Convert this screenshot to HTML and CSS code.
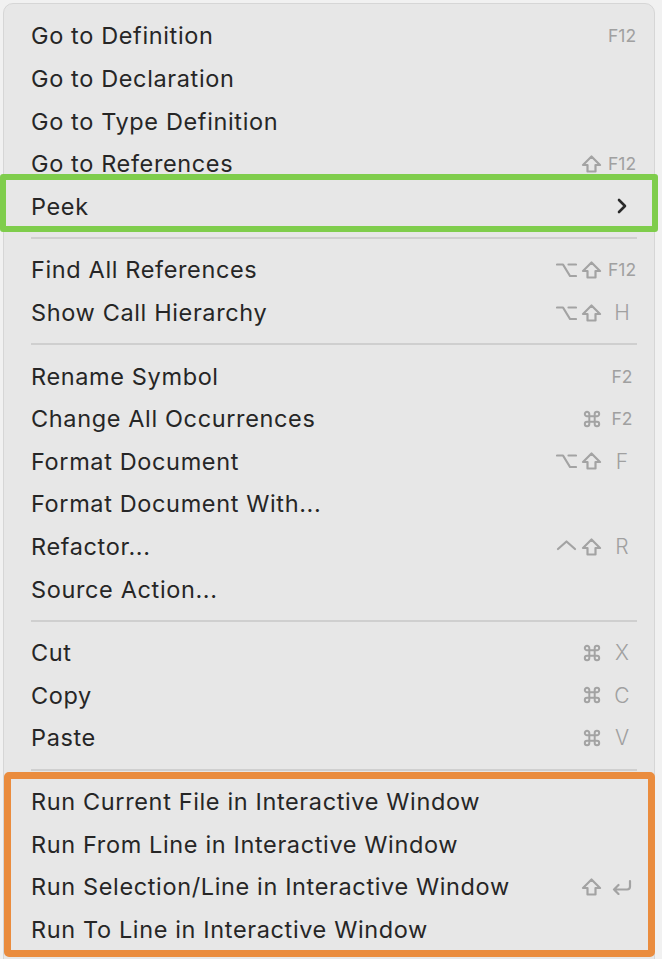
FILE: index.html
```html
<!DOCTYPE html>
<html>
<head>
<meta charset="utf-8">
<link rel="stylesheet" href="styles.css">
</head>
<body>
<div class="menu">
  <div class="row"><span class="label">Go to Definition</span><span class="keys"><span class="mods"></span><span class="key">F12</span></span></div>
  <div class="row"><span class="label">Go to Declaration</span></div>
  <div class="row"><span class="label">Go to Type Definition</span></div>
  <div class="row"><span class="label">Go to References</span><span class="keys"><span class="mods"><svg class="m" width="21" height="18" viewBox="0 0 21 18"><path d="M10.5 1.5 L19 10 H14.5 V16.5 H6.5 V10 H2 Z"/></svg></span><span class="key">F12</span></span></div>
  <div class="row peek"><span class="label">Peek</span><span class="keys"><span class="mods"></span><span class="key"><svg class="chev" width="14" height="16" viewBox="0 0 14 16"><path d="M4 2 L10 8 L4 14"/></svg></span></span></div>
  <div class="sep"></div>
  <div class="row"><span class="label">Find All References</span><span class="keys"><span class="mods"><svg class="m" width="21" height="18" viewBox="0 0 21 18"><path d="M1 3.5 H7 L14 15 H20 M12.5 3.5 H20"/></svg><svg class="m" width="21" height="18" viewBox="0 0 21 18"><path d="M10.5 1.5 L19 10 H14.5 V16.5 H6.5 V10 H2 Z"/></svg></span><span class="key">F12</span></span></div>
  <div class="row"><span class="label">Show Call Hierarchy</span><span class="keys"><span class="mods"><svg class="m" width="21" height="18" viewBox="0 0 21 18"><path d="M1 3.5 H7 L14 15 H20 M12.5 3.5 H20"/></svg><svg class="m" width="21" height="18" viewBox="0 0 21 18"><path d="M10.5 1.5 L19 10 H14.5 V16.5 H6.5 V10 H2 Z"/></svg></span><span class="key big">H</span></span></div>
  <div class="sep"></div>
  <div class="row"><span class="label">Rename Symbol</span><span class="keys"><span class="mods"></span><span class="key">F2</span></span></div>
  <div class="row"><span class="label">Change All Occurrences</span><span class="keys"><span class="mods"><svg class="m" width="20" height="18" viewBox="0 0 20 20"><path d="M7 7 V4.5 A2.5 2.5 0 1 0 4.5 7 H15.5 A2.5 2.5 0 1 0 13 4.5 V15.5 A2.5 2.5 0 1 0 15.5 13 H4.5 A2.5 2.5 0 1 0 7 15.5 Z"/></svg></span><span class="key">F2</span></span></div>
  <div class="row"><span class="label">Format Document</span><span class="keys"><span class="mods"><svg class="m" width="21" height="18" viewBox="0 0 21 18"><path d="M1 3.5 H7 L14 15 H20 M12.5 3.5 H20"/></svg><svg class="m" width="21" height="18" viewBox="0 0 21 18"><path d="M10.5 1.5 L19 10 H14.5 V16.5 H6.5 V10 H2 Z"/></svg></span><span class="key big">F</span></span></div>
  <div class="row"><span class="label">Format Document With...</span></div>
  <div class="row"><span class="label">Refactor...</span><span class="keys"><span class="mods"><svg class="m" width="21" height="18" viewBox="0 0 21 18"><path d="M2 11 L10.5 3.5 L19 11"/></svg><svg class="m" width="21" height="18" viewBox="0 0 21 18"><path d="M10.5 1.5 L19 10 H14.5 V16.5 H6.5 V10 H2 Z"/></svg></span><span class="key big">R</span></span></div>
  <div class="row"><span class="label">Source Action...</span></div>
  <div class="sep"></div>
  <div class="row"><span class="label">Cut</span><span class="keys"><span class="mods"><svg class="m" width="20" height="18" viewBox="0 0 20 20"><path d="M7 7 V4.5 A2.5 2.5 0 1 0 4.5 7 H15.5 A2.5 2.5 0 1 0 13 4.5 V15.5 A2.5 2.5 0 1 0 15.5 13 H4.5 A2.5 2.5 0 1 0 7 15.5 Z"/></svg></span><span class="key big">X</span></span></div>
  <div class="row"><span class="label">Copy</span><span class="keys"><span class="mods"><svg class="m" width="20" height="18" viewBox="0 0 20 20"><path d="M7 7 V4.5 A2.5 2.5 0 1 0 4.5 7 H15.5 A2.5 2.5 0 1 0 13 4.5 V15.5 A2.5 2.5 0 1 0 15.5 13 H4.5 A2.5 2.5 0 1 0 7 15.5 Z"/></svg></span><span class="key big">C</span></span></div>
  <div class="row"><span class="label">Paste</span><span class="keys"><span class="mods"><svg class="m" width="20" height="18" viewBox="0 0 20 20"><path d="M7 7 V4.5 A2.5 2.5 0 1 0 4.5 7 H15.5 A2.5 2.5 0 1 0 13 4.5 V15.5 A2.5 2.5 0 1 0 15.5 13 H4.5 A2.5 2.5 0 1 0 7 15.5 Z"/></svg></span><span class="key big">V</span></span></div>
  <div class="sep"></div>
  <div class="group">
    <div class="row"><span class="label">Run Current File in Interactive Window</span></div>
    <div class="row"><span class="label">Run From Line in Interactive Window</span></div>
    <div class="row"><span class="label">Run Selection/Line in Interactive Window</span><span class="keys"><span class="mods"><svg class="m" width="21" height="18" viewBox="0 0 21 18"><path d="M10.5 1.5 L19 10 H14.5 V16.5 H6.5 V10 H2 Z"/></svg></span><span class="key"><svg class="m" width="22" height="16" viewBox="0 0 22 16"><path d="M19 2 V7.5 Q19 10.5 16 10.5 H3 M7.5 6 L3 10.5 L7.5 15"/></svg></span></span></div>
    <div class="row"><span class="label">Run To Line in Interactive Window</span></div>
  </div>
</div>
</body>
</html>
```

FILE: styles.css
```css
html, body {
  margin: 0;
  padding: 0;
  background: #f1f1f1;
  overflow: hidden;
  height: 959px;
}

.menu {
  position: relative;
  box-sizing: border-box;
  width: 652px;
  margin: 3px 0 0 3px;
  padding: 10.7px 0 0 0;
  background: #e7e7e7;
  border: 1px solid #d6d6d6;
  border-radius: 10px;
  height: 980px;
  font-family: Inter, "Noto Sans", sans-serif;
}

.row {
  position: relative;
  display: flex;
  align-items: center;
  height: 42.6px;
  padding: 0 17px 0 27px;
}

.label {
  flex: 1;
  font-size: 23.5px;
  color: #262626;
  letter-spacing: 0.63px;
  white-space: nowrap;
}

.keys {
  display: flex;
  align-items: center;
  color: #a0a0a0;
}

.mods {
  display: flex;
  align-items: center;
  gap: 4px;
}

.key {
  width: 30px;
  margin-left: 5px;
  text-align: center;
  font-size: 17.5px;
  display: flex;
  justify-content: center;
  align-items: center;
}

.key.big {
  font-size: 21px;
  font-weight: 300;
}

.m {
  display: block;
  fill: none;
  stroke: #a3a3a3;
  stroke-width: 2.2;
  stroke-linejoin: round;
  stroke-linecap: round;
}

.chev {
  display: block;
  fill: none;
  stroke: #2a2a2a;
  stroke-width: 2.6;
  stroke-linejoin: round;
  stroke-linecap: round;
}

.sep {
  height: 21px;
  display: flex;
  align-items: center;
  padding: 0 17px 0 27px;
}

.sep::before {
  content: "";
  flex: 1;
  height: 2px;
  background: #cfcfcf;
}

.peek::after {
  content: "";
  position: absolute;
  top: -10.6px;
  bottom: -4.8px;
  left: -4px;
  right: -4px;
  border: 6px solid #7fcd4c;
  border-radius: 3px;
  pointer-events: none;
}

.group {
  position: relative;
}

.group::after {
  content: "";
  position: absolute;
  top: -8px;
  bottom: -6px;
  left: 0;
  right: -1px;
  border: 7px solid #ea8c3e;
  border-radius: 5px;
  pointer-events: none;
}
```
